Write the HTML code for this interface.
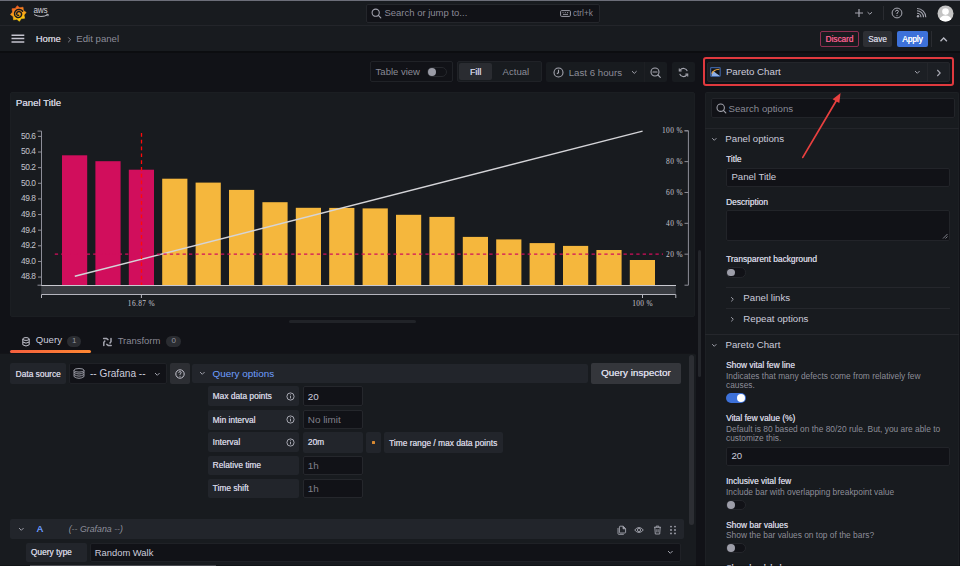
<!DOCTYPE html>
<html><head><meta charset="utf-8">
<style>
*{box-sizing:border-box;margin:0;padding:0}
html,body{width:960px;height:566px;overflow:hidden;background:#111217}
body{position:relative;font-family:"Liberation Sans",sans-serif;color:#ccccdc}
.a{position:absolute}
.t{position:absolute;line-height:1;white-space:nowrap}
svg{position:absolute;overflow:visible}
</style></head><body>
<div class="a" style="left:0px;top:0px;width:960px;height:1px;background:#6c6e79;"></div>
<div class="a" style="left:0px;top:1px;width:960px;height:25px;background:#181b1f;border-bottom:1px solid #23252a"></div>
<div class="a" style="left:0px;top:26px;width:960px;height:27px;background:#181b1f;border-bottom:2px solid #0c0d10"></div>
<svg style="left:10px;top:5px" width="16" height="17" viewBox="0 0 16 17">
<defs><linearGradient id="glg" x1="0.2" y1="0" x2="0.5" y2="1"><stop offset="0" stop-color="#f04e23"/><stop offset="0.45" stop-color="#f7941d"/><stop offset="1" stop-color="#fdd10b"/></linearGradient></defs>
<path fill="url(#glg)" stroke="url(#glg)" stroke-width="0.6" stroke-linejoin="round" d="M7.20 0.68 L9.78 2.79 L13.05 2.19 L13.38 5.51 L16.12 7.40 L14.01 9.98 L14.61 13.25 L11.29 13.58 L9.40 16.32 L6.82 14.21 L3.55 14.81 L3.22 11.49 L0.48 9.60 L2.59 7.02 L1.99 3.75 L5.31 3.42 Z"/>
<path fill="none" stroke="#181b1f" stroke-width="1.45" stroke-linecap="round" d="M12.61 6.19 L12.11 5.65 L11.53 5.20 L10.89 4.85 L10.22 4.60 L9.53 4.45 L8.83 4.42 L8.14 4.49 L7.47 4.66 L6.85 4.93 L6.28 5.29 L5.78 5.72 L5.36 6.22 L5.02 6.77 L4.77 7.35 L4.61 7.96 L4.56 8.58 L4.59 9.20 L4.72 9.79 L4.93 10.35 L5.22 10.86 L5.59 11.32 L6.01 11.71 L6.48 12.03 L6.98 12.27 L7.51 12.43 L8.05 12.50 L8.59 12.49 L9.11 12.40 L9.60 12.24 L10.06 12.00 L10.46 11.70 L10.81 11.35 L11.10 10.96 L11.32 10.53 L11.48 10.08 L11.56 9.63 L11.56 9.17 L11.50 8.72 L11.38 8.30 L11.19 7.91 L10.95 7.56 L10.67 7.25 L10.35 7.00 L10.00 6.80 L9.63 6.66 L9.25 6.59 L8.87 6.57 L8.50 6.61 L8.15 6.70 L7.82 6.84 L7.53 7.03 L7.28 7.26 L7.07 7.51 L6.90 7.79 L6.79 8.09 L6.72 8.39 L6.70 8.69 L6.73 8.98 L6.80 9.25 L6.91 9.51 L7.05 9.74 L7.22 9.93 L7.42 10.10 L7.63 10.22 L7.85 10.31 L8.08 10.36 L8.30 10.37 L8.51 10.35 L8.71 10.30"/>
</svg>
<div class="t" style="left:33.6px;top:7.0px;font-size:8.2px;font-weight:400;color:#d0d0d8;letter-spacing:-0.3px">aws</div>
<svg style="left:33px;top:13px" width="18" height="6" viewBox="0 0 18 6"><path d="M1.2 1.6 Q8 5.2 14.6 1.9" fill="none" stroke="#d0d0d8" stroke-width="0.9"/><path d="M13.3 1.2 L15.3 1.5 L14.9 3.2" fill="none" stroke="#d0d0d8" stroke-width="0.8"/></svg>
<div class="a" style="left:366px;top:3.6px;width:234px;height:19.799999999999997px;background:#111217;border:1px solid #24262b;border-radius:2px"></div>
<svg style="left:371px;top:8px" width="11" height="11" viewBox="0 0 11 11"><circle cx="4.7" cy="4.7" r="3.6" fill="none" stroke="#9fa0ab" stroke-width="1.1"/><path d="M7.4 7.4 L9.8 9.8" stroke="#9fa0ab" stroke-width="1.2" stroke-linecap="round"/></svg>
<div class="t" style="left:384.40px;top:8.26px;font-size:9.5px;font-weight:400;color:rgba(204,204,220,0.65);">Search or jump to...</div>
<svg style="left:559.5px;top:9.5px" width="11" height="7" viewBox="0 0 11 7"><rect x="0.6" y="0.6" width="9.8" height="5.8" rx="1" fill="none" stroke="#9c9da8" stroke-width="1"/><path d="M2.5 2.6h1M4.8 2.6h1M7 2.6h1.2M3 4.4h5" stroke="#9c9da8" stroke-width="0.9"/></svg>
<div class="t" style="left:572.90px;top:8.67px;font-size:8.3px;font-weight:400;color:rgba(204,204,220,0.65);">ctrl+k</div>
<svg style="left:854px;top:8px" width="20" height="10" viewBox="0 0 20 10"><path d="M5 1v8M1 5h8" stroke="#a3a4ae" stroke-width="1.2"/><path d="M13.6 4.2 L15.8 6.2 L18 4.2" fill="none" stroke="#a3a4ae" stroke-width="1"/></svg>
<div class="a" style="left:883px;top:6px;width:1px;height:14px;background:#2a2c31;"></div>
<svg style="left:891px;top:7px" width="12" height="12" viewBox="0 0 12 12"><circle cx="6" cy="6" r="4.9" fill="none" stroke="#a9aab4" stroke-width="1"/><path d="M4.5 4.6 Q4.6 3.2 6 3.2 Q7.5 3.2 7.4 4.5 Q7.3 5.5 6 6 L6 7" fill="none" stroke="#a9aab4" stroke-width="1"/><circle cx="6" cy="8.6" r="0.6" fill="#a9aab4"/></svg>
<svg style="left:916px;top:8px" width="11" height="10" viewBox="0 0 11 10"><circle cx="2" cy="8.2" r="1.2" fill="#a3a4ae"/><path d="M1 5.3 A4 4 0 0 1 5 9.3 M1 2.8 A6.5 6.5 0 0 1 7.5 9.3 M1 0.5 A8.8 8.8 0 0 1 9.8 9.3" fill="none" stroke="#a3a4ae" stroke-width="1.1"/></svg>
<svg style="left:937px;top:5px" width="17" height="17" viewBox="0 0 17 17"><defs><clipPath id="avc"><circle cx="8.5" cy="8.5" r="8"/></clipPath></defs><circle cx="8.5" cy="8.5" r="8" fill="#c4c4c4"/><g clip-path="url(#avc)" fill="#ffffff"><circle cx="8.5" cy="6.6" r="3.3"/><ellipse cx="8.5" cy="15.5" rx="6.2" ry="5"/></g></svg>
<svg style="left:11px;top:34px" width="14" height="10" viewBox="0 0 14 10"><path d="M0.5 1.3h12.8M0.5 4.6h12.8M0.5 8h12.8" stroke="#c4c4ce" stroke-width="1.5"/></svg>
<div class="t" style="left:35.80px;top:34.63px;font-size:9.3px;font-weight:400;color:#c8c8d4;text-shadow:0.2px 0 0 #c8c8d4;">Home</div>
<svg style="left:66.5px;top:35.5px" width="6" height="8" viewBox="0 0 6 8"><path d="M1.2 1.4 L3.6 3.8 L1.2 6.2" fill="none" stroke="#85868f" stroke-width="1"/></svg>
<div class="t" style="left:76.30px;top:34.33px;font-size:9.65px;font-weight:400;color:rgba(204,204,220,0.65);">Edit panel</div>
<div class="a" style="left:820px;top:31px;width:39px;height:16px;background:transparent;border:1px solid #8f2f52;border-radius:2px"></div>
<div class="t" style="left:639.50px;width:400px;text-align:center;top:36.06px;font-size:8.2px;font-weight:400;color:#ec5d8a;text-shadow:0.2px 0 0 #ec5d8a;">Discard</div>
<div class="a" style="left:863px;top:31px;width:29px;height:16px;background:#2d2f34;border-radius:2px"></div>
<div class="t" style="left:677.50px;width:400px;text-align:center;top:36.06px;font-size:8.2px;font-weight:400;color:#ccccdc;text-shadow:0.2px 0 0 #ccccdc;">Save</div>
<div class="a" style="left:897px;top:31px;width:31px;height:16px;background:#3d71d9;border-radius:2px"></div>
<div class="t" style="left:712.50px;width:400px;text-align:center;top:36.06px;font-size:8.2px;font-weight:400;color:#ffffff;text-shadow:0.2px 0 0 #ffffff;">Apply</div>
<div class="a" style="left:931px;top:31px;width:1px;height:16px;background:#2a2c31;"></div>
<svg style="left:939px;top:36px" width="10" height="7" viewBox="0 0 10 7"><path d="M1.5 5.2 L4.7 2 L7.9 5.2" fill="none" stroke="#b9bac4" stroke-width="1.3"/></svg>
<div class="a" style="left:369.5px;top:61px;width:83.5px;height:21px;background:transparent;border:1px solid #202227;border-radius:2px"></div>
<div class="t" style="left:375.60px;top:67.36px;font-size:9.5px;font-weight:400;color:rgba(204,204,220,0.65);">Table view</div>
<div class="a" style="left:426.5px;top:67px;width:20.0px;height:10px;background:#111217;border:1px solid #25272c;border-radius:5px"></div>
<div class="a" style="left:428px;top:68px;width:8px;height:8px;border-radius:50%;background:#9a9ba6"></div>
<div class="a" style="left:457px;top:61px;width:84.5px;height:21px;background:#181b1f;border:1px solid #202227;border-radius:2px"></div>
<div class="a" style="left:459px;top:63.3px;width:33.30000000000001px;height:16.700000000000003px;background:#2a2c31;border-radius:2px"></div>
<div class="t" style="left:275.60px;width:400px;text-align:center;top:67.57px;font-size:8.9px;font-weight:400;color:#ccccdc;text-shadow:0.2px 0 0 #ccccdc;">Fill</div>
<div class="t" style="left:502.60px;top:67.02px;font-size:9.55px;font-weight:400;color:rgba(204,204,220,0.65);">Actual</div>
<div class="a" style="left:546px;top:61.7px;width:121px;height:20.0px;background:#181b1f;border-radius:2px"></div>
<div class="a" style="left:644px;top:61.7px;width:1px;height:20.0px;background:#1d1f23;"></div>
<svg style="left:552.5px;top:66.5px" width="11" height="11" viewBox="0 0 11 11"><circle cx="5.5" cy="5.5" r="4.5" fill="none" stroke="#a5a6b0" stroke-width="1.1"/><path d="M5.5 2.8 V5.6 L3.9 6.8" fill="none" stroke="#a5a6b0" stroke-width="1.1"/></svg>
<div class="t" style="left:568.70px;top:67.69px;font-size:9.7px;font-weight:400;color:rgba(204,204,220,0.65);">Last 6 hours</div>
<svg style="left:631px;top:70px" width="7" height="5" viewBox="0 0 7 5"><path d="M1 1.2 L3.3 3.4 L5.6 1.2" fill="none" stroke="#a0a1ab" stroke-width="1"/></svg>
<svg style="left:650px;top:66.5px" width="12" height="12" viewBox="0 0 12 12"><circle cx="5" cy="5" r="4" fill="none" stroke="#a5a6b0" stroke-width="1.1"/><path d="M3 5h4M8 8 L10.3 10.3" stroke="#a5a6b0" stroke-width="1.1" stroke-linecap="round"/></svg>
<div class="a" style="left:672px;top:61.7px;width:23px;height:20.0px;background:#181b1f;border-radius:2px"></div>
<svg style="left:677.5px;top:66.5px" width="11" height="11" viewBox="0 0 11 11"><path d="M9.3 4.2 A4 4 0 0 0 2.2 3.1 M1.7 6.8 A4 4 0 0 0 8.8 7.9" fill="none" stroke="#a5a6b0" stroke-width="1.1"/><path d="M1.3 1.6 V3.9 H3.6 M9.7 9.4 V7.1 H7.4" fill="none" stroke="#a5a6b0" stroke-width="1.1"/></svg>
<div class="a" style="left:10px;top:92px;width:685px;height:225px;background:#181b1f;border:1px solid #1b1e22;border-radius:2px"></div>
<div class="t" style="left:15.80px;top:98.09px;font-size:9.7px;font-weight:400;color:#ccccdc;text-shadow:0.2px 0 0 #ccccdc;">Panel Title</div>
<svg style="left:0;top:0" width="960" height="566" viewBox="0 0 960 566">
<rect x="62.00" y="155.3" width="25.2" height="129.70" fill="#d10e5c"/>
<rect x="95.40" y="161.2" width="25.2" height="123.80" fill="#d10e5c"/>
<rect x="128.80" y="169.7" width="25.2" height="115.30" fill="#d10e5c"/>
<rect x="162.20" y="178.7" width="25.2" height="106.30" fill="#f5b73d"/>
<rect x="195.60" y="182.6" width="25.2" height="102.40" fill="#f5b73d"/>
<rect x="229.00" y="189.9" width="25.2" height="95.10" fill="#f5b73d"/>
<rect x="262.40" y="202.2" width="25.2" height="82.80" fill="#f5b73d"/>
<rect x="295.80" y="207.8" width="25.2" height="77.20" fill="#f5b73d"/>
<rect x="329.20" y="207.9" width="25.2" height="77.10" fill="#f5b73d"/>
<rect x="362.60" y="208.4" width="25.2" height="76.60" fill="#f5b73d"/>
<rect x="396.00" y="214.8" width="25.2" height="70.20" fill="#f5b73d"/>
<rect x="429.40" y="216.9" width="25.2" height="68.10" fill="#f5b73d"/>
<rect x="462.80" y="236.9" width="25.2" height="48.10" fill="#f5b73d"/>
<rect x="496.20" y="239.4" width="25.2" height="45.60" fill="#f5b73d"/>
<rect x="529.60" y="243.1" width="25.2" height="41.90" fill="#f5b73d"/>
<rect x="563.00" y="245.9" width="25.2" height="39.10" fill="#f5b73d"/>
<rect x="596.40" y="250" width="25.2" height="35.00" fill="#f5b73d"/>
<rect x="629.80" y="260" width="25.2" height="25.00" fill="#f5b73d"/>
<line x1="74.8" y1="276.3" x2="642.6" y2="131.1" stroke="#d4d4d8" stroke-width="1.4"/>
<line x1="141.5" y1="131" x2="141.5" y2="285" stroke="#ff0a0a" stroke-width="1.3" stroke-dasharray="3.7,3.1" stroke-dashoffset="-2"/>
<line x1="54.8" y1="254.1" x2="663" y2="254.1" stroke="#d10e5c" stroke-width="1.3" stroke-dasharray="3.3,3.09"/>
<path d="M37.5,131.1H41.5V285.2H37.5" fill="none" stroke="#8d8e98" stroke-width="1"/>
<line x1="38" y1="136.40" x2="41.5" y2="136.40" stroke="#8d8e98" stroke-width="1"/>
<text x="35.6" y="138.80" text-anchor="end" font-family="Liberation Sans" font-size="8.4" letter-spacing="-0.45" fill="#c4c4cc">50.6</text>
<line x1="38" y1="152.03" x2="41.5" y2="152.03" stroke="#8d8e98" stroke-width="1"/>
<text x="35.6" y="154.43" text-anchor="end" font-family="Liberation Sans" font-size="8.4" letter-spacing="-0.45" fill="#c4c4cc">50.4</text>
<line x1="38" y1="167.66" x2="41.5" y2="167.66" stroke="#8d8e98" stroke-width="1"/>
<text x="35.6" y="170.06" text-anchor="end" font-family="Liberation Sans" font-size="8.4" letter-spacing="-0.45" fill="#c4c4cc">50.2</text>
<line x1="38" y1="183.29" x2="41.5" y2="183.29" stroke="#8d8e98" stroke-width="1"/>
<text x="35.6" y="185.69" text-anchor="end" font-family="Liberation Sans" font-size="8.4" letter-spacing="-0.45" fill="#c4c4cc">50.0</text>
<line x1="38" y1="198.92" x2="41.5" y2="198.92" stroke="#8d8e98" stroke-width="1"/>
<text x="35.6" y="201.32" text-anchor="end" font-family="Liberation Sans" font-size="8.4" letter-spacing="-0.45" fill="#c4c4cc">49.8</text>
<line x1="38" y1="214.55" x2="41.5" y2="214.55" stroke="#8d8e98" stroke-width="1"/>
<text x="35.6" y="216.95" text-anchor="end" font-family="Liberation Sans" font-size="8.4" letter-spacing="-0.45" fill="#c4c4cc">49.6</text>
<line x1="38" y1="230.18" x2="41.5" y2="230.18" stroke="#8d8e98" stroke-width="1"/>
<text x="35.6" y="232.58" text-anchor="end" font-family="Liberation Sans" font-size="8.4" letter-spacing="-0.45" fill="#c4c4cc">49.4</text>
<line x1="38" y1="245.81" x2="41.5" y2="245.81" stroke="#8d8e98" stroke-width="1"/>
<text x="35.6" y="248.21" text-anchor="end" font-family="Liberation Sans" font-size="8.4" letter-spacing="-0.45" fill="#c4c4cc">49.2</text>
<line x1="38" y1="261.44" x2="41.5" y2="261.44" stroke="#8d8e98" stroke-width="1"/>
<text x="35.6" y="263.84" text-anchor="end" font-family="Liberation Sans" font-size="8.4" letter-spacing="-0.45" fill="#c4c4cc">49.0</text>
<line x1="38" y1="277.07" x2="41.5" y2="277.07" stroke="#8d8e98" stroke-width="1"/>
<text x="35.6" y="279.47" text-anchor="end" font-family="Liberation Sans" font-size="8.4" letter-spacing="-0.45" fill="#c4c4cc">48.8</text>
<path d="M684.5,130.8H688.4V285.2H684.5" fill="none" stroke="#8d8e98" stroke-width="1"/>
<line x1="684.5" y1="130.80" x2="688.4" y2="130.80" stroke="#8d8e98" stroke-width="1"/>
<text x="682.9" y="133.40" text-anchor="end" font-family="Liberation Serif" font-size="7.4" letter-spacing="0.35" fill="#c4c4cc">100 %</text>
<line x1="684.5" y1="161.64" x2="688.4" y2="161.64" stroke="#8d8e98" stroke-width="1"/>
<text x="682.9" y="164.24" text-anchor="end" font-family="Liberation Serif" font-size="7.4" letter-spacing="0.35" fill="#c4c4cc">80 %</text>
<line x1="684.5" y1="192.48" x2="688.4" y2="192.48" stroke="#8d8e98" stroke-width="1"/>
<text x="682.9" y="195.08" text-anchor="end" font-family="Liberation Serif" font-size="7.4" letter-spacing="0.35" fill="#c4c4cc">60 %</text>
<line x1="684.5" y1="223.32" x2="688.4" y2="223.32" stroke="#8d8e98" stroke-width="1"/>
<text x="682.9" y="225.92" text-anchor="end" font-family="Liberation Serif" font-size="7.4" letter-spacing="0.35" fill="#c4c4cc">40 %</text>
<line x1="684.5" y1="254.16" x2="688.4" y2="254.16" stroke="#8d8e98" stroke-width="1"/>
<text x="682.9" y="256.76" text-anchor="end" font-family="Liberation Serif" font-size="7.4" letter-spacing="0.35" fill="#c4c4cc">20 %</text>
<rect x="41.2" y="286" width="634.6" height="8" fill="#393c41"/>
<line x1="41.2" y1="285.5" x2="676" y2="285.5" stroke="#c9c9d0" stroke-width="1"/>
<path d="M41.5,298V294.5H675.8V298" fill="none" stroke="#b4b5bd" stroke-width="1"/>
<line x1="141.4" y1="294.5" x2="141.4" y2="298" stroke="#b4b5bd" stroke-width="1"/>
<line x1="642.5" y1="294.5" x2="642.5" y2="298" stroke="#b4b5bd" stroke-width="1"/>
<text x="141.4" y="306" text-anchor="middle" font-family="Liberation Serif" font-size="7.4" letter-spacing="0.35" fill="#c4c4cc">16.87 %</text>
<text x="642.7" y="306" text-anchor="middle" font-family="Liberation Serif" font-size="7.4" letter-spacing="0.35" fill="#c4c4cc">100 %</text>
</svg>
<div class="a" style="left:289px;top:320px;width:127px;height:3px;background:#212328;border-radius:2px"></div>
<svg style="left:21.5px;top:337px" width="9" height="10" viewBox="0 0 9 10"><ellipse cx="4" cy="2" rx="3.2" ry="1.4" fill="none" stroke="#c4c4ce" stroke-width="1"/><path d="M0.8 2V7.8Q4 10.2 7.2 7.8V2M0.8 5Q4 7.3 7.2 5" fill="none" stroke="#c4c4ce" stroke-width="1"/></svg>
<div class="t" style="left:35.80px;top:335.47px;font-size:9.6px;font-weight:400;color:#ccccdc;">Query</div>
<div class="a" style="left:67px;top:335.8px;width:14.299999999999997px;height:11.199999999999989px;background:#2a2c31;border-radius:6px"></div>
<div class="t" style="left:-125.85px;width:400px;text-align:center;top:337.23px;font-size:8px;font-weight:400;color:rgba(204,204,220,0.65);">1</div>
<div class="a" style="left:10px;top:350px;width:81.3px;height:2.8000000000000114px;background:linear-gradient(90deg,#f55f3e,#ff8833);border-radius:2px"></div>
<svg style="left:101.5px;top:336.5px" width="11" height="10" viewBox="0 0 11 10"><g fill="none" stroke="#a3a4ae" stroke-width="1.5" stroke-linecap="round"><path d="M1.6 1.6 H4.6 L6 2.6"/><path d="M9 1.4 V4.6 L8 6"/><path d="M9.2 8.4 H6.2 L4.8 7.4"/><path d="M1.8 8.6 V5.4 L2.8 4"/></g></svg>
<div class="t" style="left:117.70px;top:335.60px;font-size:9.45px;font-weight:400;color:rgba(204,204,220,0.65);">Transform</div>
<div class="a" style="left:166px;top:335.8px;width:15.300000000000011px;height:11.199999999999989px;background:#2a2c31;border-radius:6px"></div>
<div class="t" style="left:-26.35px;width:400px;text-align:center;top:337.23px;font-size:8px;font-weight:400;color:rgba(204,204,220,0.65);">0</div>
<div class="a" style="left:0px;top:353px;width:696px;height:213px;background:#181b1f;border-top:1px solid #131418;border-radius:0 2px 0 0"></div>
<div class="a" style="left:689px;top:355px;width:5.2999999999999545px;height:170px;background:#2c2e33;border-radius:3px"></div>
<div class="a" style="left:10px;top:363px;width:55.599999999999994px;height:21px;background:#22252b;border-radius:2px"></div>
<div class="t" style="left:15.60px;top:369.59px;font-size:8.4px;font-weight:400;color:#ccccdc;text-shadow:0.2px 0 0 #ccccdc;">Data source</div>
<div class="a" style="left:68.7px;top:363px;width:97.99999999999999px;height:21px;background:#111217;border:1px solid #1f2126;border-radius:2px"></div>
<svg style="left:72.5px;top:368px" width="12" height="11" viewBox="0 0 12 11"><ellipse cx="6" cy="2.3" rx="5" ry="1.8" fill="none" stroke="#a5a6b0" stroke-width="0.9"/><path d="M1 2.3V8.6Q6 12 11 8.6V2.3M1 4.4Q6 7.6 11 4.4M1 6.5Q6 9.7 11 6.5" fill="none" stroke="#a5a6b0" stroke-width="0.9"/></svg>
<div class="t" style="left:90.00px;top:369.45px;font-size:10.1px;font-weight:400;color:#ccccdc;">-- Grafana --</div>
<svg style="left:153.5px;top:371.5px" width="7" height="5" viewBox="0 0 7 5"><path d="M1 1 L3.3 3.3 L5.6 1" fill="none" stroke="#a0a1ab" stroke-width="1"/></svg>
<div class="a" style="left:169.8px;top:363px;width:19.799999999999983px;height:21px;background:#2c2e33;border-radius:2px"></div>
<svg style="left:174.7px;top:368.5px" width="10" height="10" viewBox="0 0 10 10"><circle cx="5" cy="5" r="4.2" fill="none" stroke="#c4c4ce" stroke-width="1"/><path d="M3.7 3.8 Q3.8 2.6 5 2.6 Q6.3 2.6 6.2 3.7 Q6.1 4.5 5 5 L5 5.8" fill="none" stroke="#c4c4ce" stroke-width="0.9"/><circle cx="5" cy="7.2" r="0.55" fill="#c4c4ce"/></svg>
<div class="a" style="left:192.2px;top:363.5px;width:396.09999999999997px;height:19.899999999999977px;background:#22252b;border-radius:2px"></div>
<svg style="left:199px;top:371px" width="7" height="5" viewBox="0 0 7 5"><path d="M1 1 L3.3 3.3 L5.6 1" fill="none" stroke="#9c9da7" stroke-width="1"/></svg>
<div class="t" style="left:212.60px;top:368.62px;font-size:9.9px;font-weight:400;color:#6e9fff;">Query options</div>
<div class="a" style="left:591px;top:363.3px;width:90px;height:20.30000000000001px;background:#34363b;border-radius:2px"></div>
<div class="t" style="left:601.00px;top:368.12px;font-size:9.9px;font-weight:400;color:#d8d8e2;text-shadow:0.15px 0 0 #d8d8e2;">Query inspector</div>
<div class="a" style="left:208.2px;top:386.4px;width:91.19999999999999px;height:19.80000000000001px;background:#22252b;border-radius:2px"></div>
<div class="t" style="left:212.60px;top:392.19px;font-size:8.4px;font-weight:400;color:#ccccdc;text-shadow:0.2px 0 0 #ccccdc;">Max data points</div>
<svg style="left:285.5px;top:391.8px" width="9" height="9" viewBox="0 0 9 9"><circle cx="4.5" cy="4.5" r="3.6" fill="none" stroke="#b4b5bf" stroke-width="0.9"/><path d="M4.5 3.9V6.4" stroke="#b4b5bf" stroke-width="0.9"/><circle cx="4.5" cy="2.7" r="0.5" fill="#b4b5bf"/></svg>
<div class="a" style="left:302.6px;top:386.4px;width:60.69999999999999px;height:19.600000000000023px;background:#111217;border:1px solid #25272c;border-radius:2px"></div>
<div class="t" style="left:307.80px;top:391.62px;font-size:9.9px;font-weight:400;color:#ccccdc;">20</div>
<div class="a" style="left:208.2px;top:409.8px;width:91.19999999999999px;height:19.80000000000001px;background:#22252b;border-radius:2px"></div>
<div class="t" style="left:212.60px;top:415.59px;font-size:8.4px;font-weight:400;color:#ccccdc;text-shadow:0.2px 0 0 #ccccdc;">Min interval</div>
<svg style="left:285.5px;top:415.2px" width="9" height="9" viewBox="0 0 9 9"><circle cx="4.5" cy="4.5" r="3.6" fill="none" stroke="#b4b5bf" stroke-width="0.9"/><path d="M4.5 3.9V6.4" stroke="#b4b5bf" stroke-width="0.9"/><circle cx="4.5" cy="2.7" r="0.5" fill="#b4b5bf"/></svg>
<div class="a" style="left:302.6px;top:409.8px;width:60.69999999999999px;height:19.600000000000023px;background:#111217;border:1px solid #25272c;border-radius:2px"></div>
<div class="t" style="left:307.80px;top:415.02px;font-size:9.9px;font-weight:400;color:rgba(204,204,220,0.6);">No limit</div>
<div class="a" style="left:208.2px;top:432.2px;width:91.19999999999999px;height:19.80000000000001px;background:#22252b;border-radius:2px"></div>
<div class="t" style="left:212.60px;top:437.99px;font-size:8.4px;font-weight:400;color:#ccccdc;text-shadow:0.2px 0 0 #ccccdc;">Interval</div>
<svg style="left:285.5px;top:437.6px" width="9" height="9" viewBox="0 0 9 9"><circle cx="4.5" cy="4.5" r="3.6" fill="none" stroke="#b4b5bf" stroke-width="0.9"/><path d="M4.5 3.9V6.4" stroke="#b4b5bf" stroke-width="0.9"/><circle cx="4.5" cy="2.7" r="0.5" fill="#b4b5bf"/></svg>
<div class="a" style="left:302.6px;top:432.2px;width:60.69999999999999px;height:20.5px;background:#22252b;border-radius:2px"></div>
<div class="t" style="left:307.80px;top:438.39px;font-size:8.4px;font-weight:400;color:#ccccdc;text-shadow:0.2px 0 0 #ccccdc;">20m</div>
<div class="a" style="left:208.2px;top:455.6px;width:91.19999999999999px;height:19.80000000000001px;background:#22252b;border-radius:2px"></div>
<div class="t" style="left:212.60px;top:461.39px;font-size:8.4px;font-weight:400;color:#ccccdc;text-shadow:0.2px 0 0 #ccccdc;">Relative time</div>
<div class="a" style="left:302.6px;top:455.6px;width:60.69999999999999px;height:19.600000000000023px;background:#111217;border:1px solid #25272c;border-radius:2px"></div>
<div class="t" style="left:307.80px;top:460.82px;font-size:9.9px;font-weight:400;color:rgba(204,204,220,0.6);">1h</div>
<div class="a" style="left:208.2px;top:478.5px;width:91.19999999999999px;height:19.80000000000001px;background:#22252b;border-radius:2px"></div>
<div class="t" style="left:212.60px;top:484.29px;font-size:8.4px;font-weight:400;color:#ccccdc;text-shadow:0.2px 0 0 #ccccdc;">Time shift</div>
<div class="a" style="left:302.6px;top:478.5px;width:60.69999999999999px;height:19.600000000000023px;background:#111217;border:1px solid #25272c;border-radius:2px"></div>
<div class="t" style="left:307.80px;top:483.72px;font-size:9.9px;font-weight:400;color:rgba(204,204,220,0.6);">1h</div>
<div class="a" style="left:366px;top:432.2px;width:15.199999999999989px;height:20.69999999999999px;background:#22252b;border-radius:2px"></div>
<div class="a" style="left:372.3px;top:441.3px;width:2.6px;height:2.6px;background:#d98a32;border-radius:0.5px"></div>
<div class="a" style="left:384px;top:432.2px;width:119.10000000000002px;height:20.69999999999999px;background:#22252b;border-radius:2px"></div>
<div class="t" style="left:389.00px;top:438.69px;font-size:8.4px;font-weight:400;color:#ccccdc;text-shadow:0.2px 0 0 #ccccdc;">Time range / max data points</div>
<div class="a" style="left:10px;top:518.8px;width:674px;height:20.5px;background:#22252b;border-radius:2px"></div>
<svg style="left:17.5px;top:527px" width="7" height="5" viewBox="0 0 7 5"><path d="M1 1 L3.3 3.3 L5.6 1" fill="none" stroke="#9c9da7" stroke-width="1"/></svg>
<div class="t" style="left:36.80px;top:525.01px;font-size:9.2px;font-weight:400;color:#6e9fff;text-shadow:0.2px 0 0 #6e9fff;">A</div>
<div class="t" style="left:68.70px;top:525.15px;font-size:8.8px;font-weight:400;color:rgba(204,204,220,0.65);font-style:italic">(-- Grafana --)</div>
<svg style="left:616.5px;top:524.5px" width="10" height="10" viewBox="0 0 10 10"><path d="M3 1.2H6.2L8.6 3.6V7.4Q8.6 8 8 8H3Q2.4 8 2.4 7.4V1.8Q2.4 1.2 3 1.2Z" fill="none" stroke="#a5a6b0" stroke-width="0.9"/><path d="M6 1.2V3.8H8.6" fill="#a5a6b0" stroke="#a5a6b0" stroke-width="0.8"/><path d="M1 3V8.6Q1 9.3 1.7 9.3H6.8" fill="none" stroke="#a5a6b0" stroke-width="0.9"/></svg>
<svg style="left:634px;top:526px" width="10" height="8" viewBox="0 0 10 8"><path d="M0.7 4Q5 -1 9.3 4Q5 9 0.7 4Z" fill="none" stroke="#a5a6b0" stroke-width="0.9"/><circle cx="5" cy="4" r="1.6" fill="none" stroke="#a5a6b0" stroke-width="0.9"/></svg>
<svg style="left:652.5px;top:524.5px" width="9" height="10" viewBox="0 0 9 10"><path d="M1 2.3H8M3.2 2.3V1.1H5.8V2.3M1.8 2.3L2.3 9H6.7L7.2 2.3" fill="none" stroke="#a5a6b0" stroke-width="0.9"/><path d="M3.8 4.2V7.4M5.2 4.2V7.4" stroke="#a5a6b0" stroke-width="0.8"/></svg>
<svg style="left:669px;top:524.5px" width="8" height="10" viewBox="0 0 8 10"><g fill="#a5a6b0"><circle cx="2" cy="1.6" r="0.9"/><circle cx="6" cy="1.6" r="0.9"/><circle cx="2" cy="5" r="0.9"/><circle cx="6" cy="5" r="0.9"/><circle cx="2" cy="8.4" r="0.9"/><circle cx="6" cy="8.4" r="0.9"/></g></svg>
<div class="a" style="left:26px;top:542.5px;width:60.5px;height:19.5px;background:#22252b;border-radius:2px"></div>
<div class="t" style="left:30.80px;top:548.39px;font-size:8.4px;font-weight:400;color:#ccccdc;text-shadow:0.2px 0 0 #ccccdc;">Query type</div>
<div class="a" style="left:89.6px;top:542.5px;width:591.4px;height:19.5px;background:#111217;border:1px solid #1f2126;border-radius:2px"></div>
<div class="t" style="left:94.80px;top:547.54px;font-size:9.4px;font-weight:400;color:#ccccdc;">Random Walk</div>
<svg style="left:667px;top:549.5px" width="7" height="5" viewBox="0 0 7 5"><path d="M1 1 L3.3 3.3 L5.6 1" fill="none" stroke="#a0a1ab" stroke-width="1"/></svg>
<div class="a" style="left:30px;top:565px;width:186px;height:1px;background:#5a5c63;"></div>
<div class="a" style="left:698px;top:250px;width:3px;height:127px;background:#24262b;border-radius:2px"></div>
<div class="a" style="left:707px;top:62px;width:243px;height:20px;background:#1c1f24;border:1px solid #24262b;border-radius:2px"></div>
<div class="a" style="left:927px;top:62px;width:1px;height:20px;background:#24262b;"></div>
<svg style="left:710px;top:67px" width="11" height="10" viewBox="0 0 11 10"><rect x="0.6" y="0.6" width="9.6" height="8.8" rx="0.8" fill="#121419" stroke="#3d5f9c" stroke-width="1.2"/><path d="M1.6 9 L1.6 5.8 Q2.6 3.6 3.8 4.2 Q6 6.4 9.4 8.6 L9.4 9 Z" fill="#8fb0e6"/><path d="M1.8 6.6 Q3.4 2.6 9.4 2.3" fill="none" stroke="#f0a53a" stroke-width="1.1"/></svg>
<div class="t" style="left:725.90px;top:67.49px;font-size:9.7px;font-weight:400;color:#ccccdc;">Pareto Chart</div>
<svg style="left:913.5px;top:70px" width="7" height="5" viewBox="0 0 7 5"><path d="M1 1 L3.3 3.3 L5.6 1" fill="none" stroke="#a0a1ab" stroke-width="1"/></svg>
<svg style="left:936px;top:68.5px" width="6" height="8" viewBox="0 0 6 8"><path d="M1.3 1 L4.2 4 L1.3 7" fill="none" stroke="#a8a9b3" stroke-width="1.1"/></svg>
<div class="a" style="left:703.4px;top:57px;width:250.80000000000007px;height:29px;background:transparent;border:2px solid #e0393e;border-radius:3px"></div>
<div class="a" style="left:704.5px;top:92px;width:254.5px;height:474px;background:#181b1f;border:1px solid #1d2024;border-bottom:none;border-radius:2px 2px 0 0"></div>
<div class="a" style="left:711px;top:98px;width:244px;height:20.200000000000003px;background:#111217;border:1px solid #222429;border-radius:2px"></div>
<svg style="left:715.5px;top:103px" width="11" height="11" viewBox="0 0 11 11"><circle cx="4.7" cy="4.7" r="3.7" fill="none" stroke="#a0a1ab" stroke-width="1.1"/><path d="M7.4 7.4 L9.8 9.8" stroke="#a0a1ab" stroke-width="1.2" stroke-linecap="round"/></svg>
<div class="t" style="left:728.50px;top:103.59px;font-size:9.7px;font-weight:400;color:rgba(204,204,220,0.65);">Search options</div>
<div class="a" style="left:705px;top:128px;width:254px;height:1px;background:#23252a;"></div>
<svg style="left:711px;top:137px" width="7" height="5" viewBox="0 0 7 5"><path d="M1.2 1.2 L3.3 3.3 L5.4 1.2" fill="none" stroke="#9c9da7" stroke-width="1"/></svg>
<div class="t" style="left:725.30px;top:134.29px;font-size:9.7px;font-weight:400;color:#ccccdc;">Panel options</div>
<div class="t" style="left:726.00px;top:154.89px;font-size:8.4px;font-weight:400;color:#ccccdc;text-shadow:0.2px 0 0 #ccccdc;">Title</div>
<div class="a" style="left:726px;top:167.5px;width:223.5px;height:19.19999999999999px;background:#111217;border:1px solid #222429;border-radius:2px"></div>
<div class="t" style="left:731.40px;top:171.97px;font-size:9.6px;font-weight:400;color:#ccccdc;">Panel Title</div>
<div class="t" style="left:726.00px;top:198.19px;font-size:8.4px;font-weight:400;color:#ccccdc;text-shadow:0.2px 0 0 #ccccdc;">Description</div>
<div class="a" style="left:726px;top:210px;width:223.5px;height:31px;background:#111217;border:1px solid #222429;border-radius:2px"></div>
<svg style="left:942px;top:233px" width="6" height="6" viewBox="0 0 6 6"><path d="M5.5 1 L1 5.5 M5.5 3.5 L3.5 5.5" stroke="#9c9da7" stroke-width="0.8"/></svg>
<div class="t" style="left:726.00px;top:255.19px;font-size:8.4px;font-weight:400;color:#ccccdc;text-shadow:0.2px 0 0 #ccccdc;">Transparent background</div>
<div class="a" style="left:725.5px;top:267.3px;width:20.100000000000023px;height:10.399999999999977px;background:#111217;border:1px solid #24262b;border-radius:5.2px"></div>
<div class="a" style="left:727.1px;top:268.6px;width:7.9px;height:7.9px;border-radius:50%;background:#9d9ea9"></div>
<div class="a" style="left:726px;top:287px;width:223.5px;height:1px;background:#25272c;"></div>
<svg style="left:730px;top:295.5px" width="5" height="7" viewBox="0 0 5 7"><path d="M1.2 1.2 L3.3 3.3 L1.2 5.4" fill="none" stroke="#9c9da7" stroke-width="1"/></svg>
<div class="t" style="left:743.30px;top:293.49px;font-size:9.7px;font-weight:400;color:#ccccdc;">Panel links</div>
<div class="a" style="left:726px;top:307.6px;width:223.5px;height:1.0px;background:#25272c;"></div>
<svg style="left:730px;top:316.3px" width="5" height="7" viewBox="0 0 5 7"><path d="M1.2 1.2 L3.3 3.3 L1.2 5.4" fill="none" stroke="#9c9da7" stroke-width="1"/></svg>
<div class="t" style="left:743.30px;top:314.29px;font-size:9.7px;font-weight:400;color:#ccccdc;">Repeat options</div>
<div class="a" style="left:705px;top:334px;width:254px;height:1px;background:#25272c;"></div>
<svg style="left:711px;top:343.2px" width="7" height="5" viewBox="0 0 7 5"><path d="M1.2 1.2 L3.3 3.3 L5.4 1.2" fill="none" stroke="#9c9da7" stroke-width="1"/></svg>
<div class="t" style="left:725.50px;top:340.29px;font-size:9.7px;font-weight:400;color:#ccccdc;">Pareto Chart</div>
<div class="t" style="left:726.00px;top:360.99px;font-size:8.4px;font-weight:400;color:#ccccdc;text-shadow:0.2px 0 0 #ccccdc;">Show vital few line</div>
<div class="t" style="left:726.00px;top:371.61px;font-size:8.38px;font-weight:400;color:rgba(204,204,220,0.65);">Indicates that many defects come from relatively few</div>
<div class="t" style="left:726.00px;top:381.31px;font-size:8.38px;font-weight:400;color:rgba(204,204,220,0.65);">causes.</div>
<div class="a" style="left:725.5px;top:392.9px;width:20.5px;height:10.399999999999977px;background:#3d71d9;border-radius:5.2px"></div>
<div class="a" style="left:737.3px;top:394.1px;width:7.9px;height:7.9px;border-radius:50%;background:#ffffff"></div>
<div class="t" style="left:726.00px;top:413.99px;font-size:8.4px;font-weight:400;color:#ccccdc;text-shadow:0.2px 0 0 #ccccdc;">Vital few value (%)</div>
<div class="t" style="left:726.00px;top:424.61px;font-size:8.38px;font-weight:400;color:rgba(204,204,220,0.65);">Default is 80 based on the 80/20 rule. But, you are able to</div>
<div class="t" style="left:726.00px;top:434.31px;font-size:8.38px;font-weight:400;color:rgba(204,204,220,0.65);">customize this.</div>
<div class="a" style="left:726px;top:446.7px;width:223.5px;height:19.5px;background:#111217;border:1px solid #222429;border-radius:2px"></div>
<div class="t" style="left:731.40px;top:451.07px;font-size:9.6px;font-weight:400;color:#ccccdc;">20</div>
<div class="t" style="left:726.00px;top:477.19px;font-size:8.4px;font-weight:400;color:#ccccdc;text-shadow:0.2px 0 0 #ccccdc;">Inclusive vital few</div>
<div class="t" style="left:726.00px;top:488.11px;font-size:8.38px;font-weight:400;color:rgba(204,204,220,0.65);">Include bar with overlapping breakpoint value</div>
<div class="a" style="left:725.5px;top:499.5px;width:20.100000000000023px;height:10.399999999999977px;background:#111217;border:1px solid #24262b;border-radius:5.2px"></div>
<div class="a" style="left:727.1px;top:500.8px;width:7.9px;height:7.9px;border-radius:50%;background:#9d9ea9"></div>
<div class="t" style="left:726.00px;top:520.79px;font-size:8.4px;font-weight:400;color:#ccccdc;text-shadow:0.2px 0 0 #ccccdc;">Show bar values</div>
<div class="t" style="left:726.00px;top:531.01px;font-size:8.38px;font-weight:400;color:rgba(204,204,220,0.65);">Show the bar values on top of the bars?</div>
<div class="a" style="left:725.5px;top:542.8000000000001px;width:20.100000000000023px;height:10.399999999999977px;background:#111217;border:1px solid #24262b;border-radius:5.2px"></div>
<div class="a" style="left:727.1px;top:544.1px;width:7.9px;height:7.9px;border-radius:50%;background:#9d9ea9"></div>
<div class="t" style="left:726.00px;top:564.49px;font-size:8.4px;font-weight:400;color:#ccccdc;text-shadow:0.2px 0 0 #ccccdc;">Show bar labels</div>
<svg style="left:0;top:0" width="960" height="566" viewBox="0 0 960 566"><line x1="802.8" y1="157.4" x2="837.6" y2="98.5" stroke="#e8403f" stroke-width="1.7" stroke-linecap="round"/><path d="M840.6 93 L832.6 99.2 L839.3 103 Z" fill="#e8403f"/></svg>
<div class="a" style="left:0px;top:565px;width:960px;height:1px;background:rgba(0,0,0,0.22);"></div>
</body></html>
